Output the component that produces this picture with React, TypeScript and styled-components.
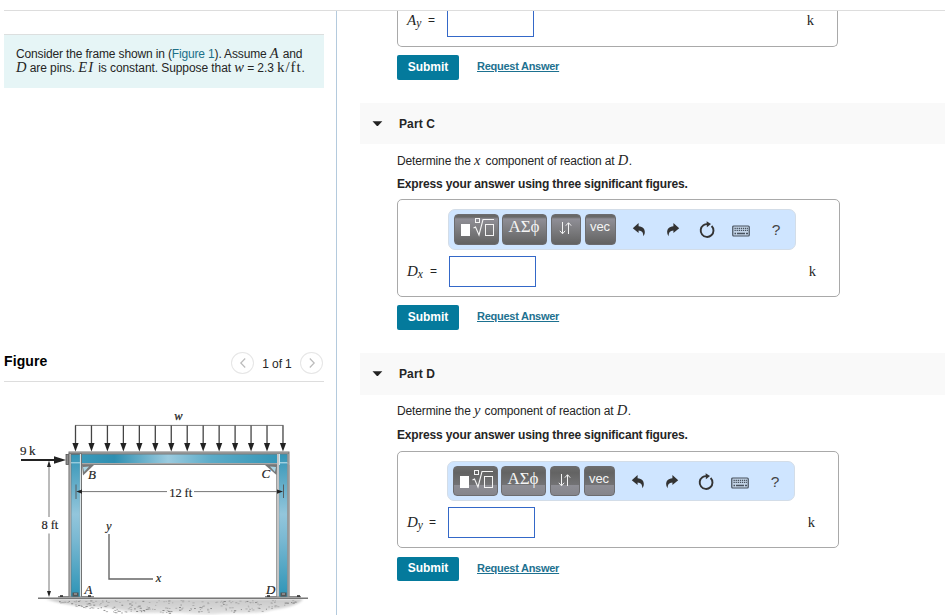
import React from "react";
import styled, { createGlobalStyle, css } from "styled-components";

const Global = createGlobalStyle`
  * { box-sizing: border-box; }
  body { margin: 0; background: #fff; overflow: hidden; }
`;

const sans = `"Liberation Sans", Arial, sans-serif`;
const serif = `"Liberation Serif", "Times New Roman", serif`;

const Page = styled.div`
  width: 945px;
  height: 615px;
  overflow: hidden;
  display: flex;
  flex-direction: column;
  font-family: ${sans};
  font-size: 12px;
  color: #252525;
`;
const TopRule = styled.div`
  flex: none;
  height: 11px;
  margin-left: 4px;
  border-bottom: 1px solid #ddd;
`;
const Columns = styled.div`
  flex: 1;
  min-height: 0;
  display: flex;
`;
const Aside = styled.aside`
  width: 337px;
  flex: none;
  border-right: 1px solid #b4cadd;
  display: flex;
  flex-direction: column;
  padding-top: 23px;
`;
const Problem = styled.div`
  margin-left: 4px;
  width: 320px;
  height: 54px;
  flex: none;
  background: #e6f5f6;
  border-top: 1px solid #dcdfdf;
  padding: 12px 0 0 12px;
`;
const Line = styled.div<{ $ls?: number }>`
  height: 14px;
  line-height: 14px;
  white-space: nowrap;
  letter-spacing: ${(p) => p.$ls ?? 0}px;
`;
const Var = styled.i<{ $track?: number; $pad?: number }>`
  font-family: ${serif};
  font-size: 14.5px;
  line-height: 0;
  letter-spacing: ${(p) => p.$track ?? 0}px;
  padding-right: ${(p) => p.$pad ?? 0}px;
`;
const Roman = styled.span`
  font-family: ${serif};
  font-size: 15px;
  line-height: 0;
  letter-spacing: 0.9px;
`;
const FigureLink = styled.a`
  color: #1c7088;
`;
const FigureBar = styled.div`
  margin: 258px 0 0 4px;
  width: 320px;
  height: 36px;
  flex: none;
  border-bottom: 1px solid #ddd;
  display: flex;
  align-items: flex-start;
  justify-content: space-between;
`;
const FigureTitle = styled.h2`
  margin: 6px 0 0;
  font-size: 14px;
  line-height: 18px;
  color: #000;
  letter-spacing: 0.1px;
`;
const Pager = styled.div`
  display: flex;
  align-items: center;
  margin: 6px 1px 0 0;
  height: 22px;
`;
const PageCount = styled.span`
  width: 46px;
  text-align: center;
  line-height: 16px;
  padding-top: 1px;
  letter-spacing: -0.12px;
`;
const RoundButton = styled.button`
  width: 23px;
  height: 22px;
  border: 1px solid #e6e6e6;
  border-radius: 50%;
  background: #fff;
  padding: 0;
  display: flex;
  align-items: center;
  justify-content: center;
`;
const FigureArea = styled.figure`
  margin: 0;
  padding-top: 18px;
  line-height: 0;
`;
const Main = styled.main`
  flex: 1;
  min-width: 0;
  padding-left: 23px;
  overflow: hidden;
`;
const PartHeader = styled.header<{ $h: number }>`
  display: flex;
  align-items: center;
  height: ${(p) => p.$h}px;
  background: #f9f9f9;
  margin-top: 23px;
  padding-left: 12px;
  svg { margin-right: 16px; }
`;
const PartTitle = styled.h3`
  margin: 0;
  font-size: 12px;
  line-height: 16px;
  letter-spacing: 0.12px;
`;
const PartBody = styled.section`
  padding-left: 37px;
`;
const Question = styled.p<{ $top: number }>`
  margin: ${(p) => p.$top}px 0 0;
  line-height: 16px;
  height: 16px;
  letter-spacing: -0.13px;
  white-space: nowrap;
`;
const Instruction = styled.p<{ $top: number }>`
  margin: ${(p) => p.$top}px 0 0;
  font-weight: bold;
  line-height: 14px;
  height: 14px;
  letter-spacing: -0.155px;
  white-space: nowrap;
`;
const AnswerBox = styled.div<{ $w: number; $h: number; $top?: number; $cut?: boolean }>`
  width: ${(p) => p.$w}px;
  height: ${(p) => p.$h}px;
  margin-top: ${(p) => p.$top ?? 0}px;
  border: 1px solid #a9a9a9;
  border-radius: 5px;
  display: flex;
  flex-direction: column;
  padding-top: 9px;
  ${(p) =>
    p.$cut &&
    css`
      border-top: 0;
      border-top-left-radius: 0;
      border-top-right-radius: 0;
      padding-top: 0;
    `}
`;
const Toolbar = styled.div<{ $indent: number; $h: number }>`
  margin: 0 0 6px ${(p) => p.$indent}px;
  width: 348px;
  height: ${(p) => p.$h}px;
  flex: none;
  background: #cfe5ff;
  border: 1px solid #d3dde8;
  border-radius: 7px;
  display: flex;
  padding: 4px 0 0 5px;
`;
const Tool = styled.button<{ $w: number; $gap: number; $glossy?: boolean }>`
  width: ${(p) => p.$w}px;
  height: ${(p) => (p.$glossy ? 30 : 31)}px;
  margin: 0 ${(p) => p.$gap}px 0 0;
  padding: 0;
  border: 1px solid #6c6c6f;
  border-radius: 4px;
  color: #f4f4f4;
  display: flex;
  justify-content: center;
  background: ${(p) =>
    p.$glossy
      ? "linear-gradient(#6c6c6c 0, #636363 20%, #737375 64%, #8d8d94 66%, #85858b 100%)"
      : "linear-gradient(#686868 0, #686868 2px, #8f8e96 4px, #7d7d80 50%, #626262 100%)"};
`;
const Greek = styled.span`
  font-family: ${serif};
  font-size: 17px;
  line-height: 24px;
  letter-spacing: -0.1px;
  margin-left: -1px;
`;
const Vec = styled.span`
  font-family: ${sans};
  font-size: 13px;
  line-height: 23px;
  margin-left: -1px;
`;
const IconCell = styled.span`
  width: 34px;
  height: 32px;
  display: flex;
  justify-content: center;
  align-items: center;
  color: #333;
`;
const Help = styled.span`
  font-size: 15.5px;
  line-height: 30px;
  padding-left: 2px;
  color: #444;
`;
const EntryRow = styled.div<{ $h: number }>`
  display: flex;
  height: ${(p) => p.$h}px;
  flex: none;
`;
const EntryLabel = styled.label<{ $w: number; $cut?: boolean }>`
  width: ${(p) => p.$w}px;
  padding-left: 9px;
  font-family: ${serif};
  font-size: 15px;
  line-height: ${(p) => (p.$cut ? 18 : 30)}px;
  display: flex;
  sub {
    font-size: 11.5px;
    position: relative;
    top: 2px;
    vertical-align: baseline;
    line-height: 0;
  }
`;
const Equals = styled.span`
  margin-left: auto;
  margin-right: 12px;
  font-family: ${sans};
  font-size: 12px;
`;
const Entry = styled.input<{ $cut?: boolean }>`
  width: 87px;
  height: 100%;
  border: 1px solid #3468c8;
  border-top-width: ${(p) => (p.$cut ? 0 : 1)}px;
  background: #fff;
  padding: 0 4px;
  outline: none;
`;
const Unit = styled.span<{ $cut?: boolean }>`
  margin-left: auto;
  margin-right: 23px;
  font-family: ${serif};
  font-size: 14.5px;
  line-height: ${(p) => (p.$cut ? 19 : 31)}px;
`;
const Actions = styled.div<{ $top: number; $h: number }>`
  display: flex;
  margin-top: ${(p) => p.$top}px;
  height: ${(p) => p.$h}px;
`;
const Submit = styled.button`
  width: 62px;
  border: 0;
  border-radius: 2px;
  background: #047a9c;
  color: #fff;
  font: bold 12px/23px ${sans};
  letter-spacing: 0;
  padding: 0 0 1px;
`;
const RequestLink = styled.a`
  margin-left: 18px;
  font-size: 11px;
  line-height: 23px;
  font-weight: bold;
  color: #1d7190;
  text-decoration: underline;
  letter-spacing: -0.26px;
`;

const Triangle = () => (
  <svg width="11" height="6" viewBox="0 0 11 6">
    <path d="M.5 .3H10.3L5.9 5H4.9Z" fill="#222" />
  </svg>
);

const RootIcon = () => (
  <svg width="43" height="28" viewBox="0 0 43 28" fill="none" stroke="#f4f4f4">
    <rect x="6" y="9" width="9" height="12" fill="#fff" stroke="none" />
    <rect x="20.5" y="3.5" width="4" height="4" />
    <path d="M18.5 13L20.5 12L24 20L28 4.5H39" strokeWidth="1.1" />
    <rect x="30.5" y="9.5" width="8" height="11" />
  </svg>
);
const SwapIcon = () => (
  <svg width="28" height="28" viewBox="0 0 28 28" fill="none" stroke="#f4f4f4">
    <path d="M10.5 7V18.5M7.8 15.8L10.5 18.8L13.2 15.8M16.5 19V8M13.8 10.7L16.5 7.7L19.2 10.7" />
  </svg>
);
const UndoIcon = () => (
  <svg width="14" height="16" viewBox="0 0 14 16">
    <path d="M.8 6.2L6.6 1V4.2C11 4.6 13 7 12.8 10.5C12.7 12 12.2 13 11.3 14.2C11.3 10.5 10 8.8 6.6 8.6V11Z" fill="currentColor" />
  </svg>
);
const RedoIcon = () => (
  <svg width="14" height="16" viewBox="0 0 14 16">
    <path d="M13.2 6.2L7.4 1V4.2C3 4.6 1 7 1.2 10.5C1.3 12 1.8 13 2.7 14.2C2.7 10.5 4 8.8 7.4 8.6V11Z" fill="currentColor" />
  </svg>
);
const ResetIcon = () => (
  <svg width="18" height="18" viewBox="0 0 18 18">
    <path d="M5.4 4.3A6.4 6.4 0 1 0 13.6 5M9.3 3.1C7.6 3 6.6 3.5 5.4 4.3" fill="none" stroke="currentColor" strokeWidth="1.9" />
    <path d="M8.6 .3L13 3L8.9 6.2Z" fill="currentColor" />
  </svg>
);
const KeyboardIcon = () => (
  <svg width="18" height="14" viewBox="0 -2 18 14">
    <rect x=".75" y="1" width="16.5" height="10" rx="1" fill="#c2d3e6" stroke="#48525e" strokeWidth="1.2" />
    <path d="M2.5 3.4H16M2.5 5.4H16" stroke="#48525e" strokeWidth="1.3" strokeDasharray="1.3 .8" />
    <path d="M2.5 8.4H4M5 8.4H13M14 8.4H16" stroke="#48525e" strokeWidth="1.5" />
  </svg>
);

const MathToolbar = ({ indent, height, glossy }: { indent: number; height: number; glossy?: boolean }) => (
  <Toolbar $indent={indent} $h={height}>
    <Tool $w={45} $gap={3} $glossy={glossy}><RootIcon /></Tool>
    <Tool $w={45} $gap={4} $glossy={glossy}><Greek>ΑΣϕ</Greek></Tool>
    <Tool $w={30} $gap={4} $glossy={glossy}><SwapIcon /></Tool>
    <Tool $w={31} $gap={6} $glossy={glossy}><Vec>vec</Vec></Tool>
    <IconCell><UndoIcon /></IconCell>
    <IconCell><RedoIcon /></IconCell>
    <IconCell><ResetIcon /></IconCell>
    <IconCell><KeyboardIcon /></IconCell>
    <IconCell><Help>?</Help></IconCell>
  </Toolbar>
);

const SubmitRow = ({ top, height }: { top: number; height: number }) => (
  <Actions $top={top} $h={height}>
    <Submit>Submit</Submit>
    <RequestLink>Request Answer</RequestLink>
  </Actions>
);

const EntryLine = ({ name, sub, labelWidth, cut }: { name: string; sub: string; labelWidth: number; cut?: boolean }) => (
  <EntryRow $h={cut ? 26 : 31}>
    <EntryLabel $w={labelWidth} $cut={cut}>
      <i>{name}<sub>{sub}</sub></i>
      <Equals>=</Equals>
    </EntryLabel>
    <Entry $cut={cut} />
    <Unit $cut={cut}>k</Unit>
  </EntryRow>
);

const noise = (n: number) => {
  const v = Math.sin(n * 127.1 + 11.7) * 43758.5453;
  return v - Math.floor(v);
};
const loads = Array.from({ length: 14 }, (_, i) => 75.5 + i * 15.96);
const speckles = Array.from({ length: 230 }, (_, i) => {
  const x = 56 + noise(i) * 240;
  const depth = x < 105 ? 3 + (x - 56) / 6 : x > 262 ? 11 - (x - 262) / 4 : 13;
  return { x, y: 600 + noise(i + 500) * depth, w: 1 + noise(i + 900) * 1.4, dark: i % 4 === 0 };
});

const FrameDrawing = () => (
  <svg width="336" height="215" viewBox="0 400 336 215" fontFamily={serif} fill="#222">
    <defs>
      <linearGradient id="beam" x1="0" x2="1">
        <stop offset="0" stopColor="#3f9dbd" />
        <stop offset=".2" stopColor="#2f8fb1" />
        <stop offset=".45" stopColor="#9bcbdf" />
        <stop offset=".65" stopColor="#5cabc8" />
        <stop offset="1" stopColor="#2f93b4" />
      </linearGradient>
      <linearGradient id="column" x1="0" x2="0" y1="0" y2="1">
        <stop offset="0" stopColor="#3595b6" />
        <stop offset=".42" stopColor="#93c6dc" />
        <stop offset=".6" stopColor="#79b8d2" />
        <stop offset="1" stopColor="#2d94b6" />
      </linearGradient>
      <linearGradient id="soil" x1="0" x2="0" y1="0" y2="1">
        <stop offset="0" stopColor="#c8c8c8" />
        <stop offset=".7" stopColor="#dadada" />
        <stop offset="1" stopColor="#e6e6e6" />
      </linearGradient>
      <filter id="soften" x="-10%" y="-50%" width="120%" height="200%">
        <feGaussianBlur stdDeviation="1" />
      </filter>
    </defs>

    <path d="M46 599H303C298 606 284 608 272 610C258 615 236 612 215 614.5C192 615 178 611 155 613C130 614 118 608 96 607C76 607 58 603 46 599Z" fill="url(#soil)" filter="url(#soften)" />
    {speckles.map((s, i) => (
      <rect key={i} x={s.x} y={s.y} width={s.w} height=".9" fill={s.dark ? "#808080" : "#ababab"} />
    ))}
    <path d="M38 598.2H308" stroke="#777" strokeWidth="1.6" />
    <path d="M58 596.7H94M265 596.7H301" stroke="#8a8a8a" strokeWidth="1.4" />
    <path d="M60 596H63M88 596H91M267 596H270M297 596H300" stroke="#222" strokeWidth="1.6" />

    <path d="M82 465H94L83 475.5Z" fill="#777" />
    <path d="M83 467L89 466.5L84 472Z" fill="#a9d4e2" />
    <path d="M277 465H265L276.5 475Z" fill="#777" />
    <path d="M276 467L270 466.5L275 472Z" fill="#a9d4e2" />

    <rect x="66" y="454.5" width="3" height="10" fill="#8b8b8b" stroke="#444" strokeWidth=".7" />
    <rect x="68.5" y="451.5" width="221" height="13.5" fill="#777" />
    <rect x="69.5" y="452.3" width="219" height="1.2" fill="#a5a5a5" />
    <rect x="71" y="454.5" width="216" height="8.5" fill="url(#beam)" />
    <rect x="69" y="463.2" width="220" height="1" fill="#b5b5b5" />

    <rect x="68.5" y="453.5" width="13.5" height="143" fill="#666" />
    <rect x="69.4" y="454" width="1.5" height="142.5" fill="#b5b5b5" />
    <rect x="71.3" y="454.7" width="8.6" height="141.8" fill="url(#column)" />
    <rect x="79.9" y="454" width="1.2" height="142.5" fill="#d9e4e8" />
    <path d="M71 462.8H80" stroke="#b9e0ec" />

    <rect x="276.3" y="465" width="13.3" height="131.5" fill="#777" />
    <rect x="277" y="454" width="2.2" height="142.5" fill="#c4c4c4" />
    <rect x="279.2" y="454.7" width="8.2" height="141.8" fill="url(#column)" />
    <rect x="287.4" y="454" width="1.5" height="142.5" fill="#9f9f9f" />
    <path d="M279.5 454V465M280 462.8H287.4" stroke="#c9e8f1" />
    <rect x="72.5" y="592.5" width="6" height="4" fill="#555" />
    <rect x="280.5" y="592.5" width="6" height="4" fill="#555" />
    <path d="M74 594H77M282 594H285" stroke="#bbb" />

    <path d="M75 425.4H283.5" stroke="#777" />
    {loads.map((x) => (
      <g key={x}>
        <path d={`M${x} 425.4V445`} stroke="#444" strokeWidth="1.3" />
        <path d={`M${x - 3.1} 443H${x + 3.1}L${x} 451.6Z`} />
      </g>
    ))}

    <path d="M21 460H57" stroke="#222" strokeWidth="2.2" />
    <path d="M54 456.2L66 460L54 463.8Z" />
    <path d="M49 465V517M49 533.5V592M82 491.6H167M194 491.6H278" stroke="#777" fill="none" />
    <path d="M76 484.5V499M283.5 484.5V498" stroke="#555" strokeWidth=".9" />
    <path d="M47 467L49 460.5L51 467ZM47 591L49 597L51 591ZM82 489.5L76.3 491.6L82 493.7ZM277 489.5L283 491.6L277 493.7Z" />
    <path d="M109 534V579H153" stroke="#666" strokeWidth="1.4" fill="none" />

    <g stroke="#222" strokeWidth=".15">
      <text x="20" y="455" fontSize="13" letterSpacing="-.4">9 k</text>
      <text x="41.5" y="528.7" fontSize="12.5" letterSpacing="-.1">8 ft</text>
      <text x="169.3" y="496.7" fontSize="12.5" letterSpacing="-.1">12 ft</text>
    </g>
    <g fontStyle="italic" stroke="#222" strokeWidth=".15">
      <text x="174.3" y="419.5" fontSize="12.5" strokeWidth=".25">w</text>
      <text x="88" y="479.3" fontSize="13">B</text>
      <text x="261.5" y="478.3" fontSize="13">C</text>
      <text x="84.5" y="594.3" fontSize="13">A</text>
      <text x="266" y="593.6" fontSize="13">D</text>
      <text x="106" y="529.7" fontSize="12.5">y</text>
      <text x="155.7" y="581.7" fontSize="12.5">x</text>
    </g>
  </svg>
);

export default function App() {
  return (
    <>
      <Global />
      <Page>
        <TopRule />
        <Columns>
          <Aside>
            <Problem>
              <Line $ls={-0.15}>
                Consider the frame shown in (<FigureLink>Figure 1</FigureLink>). Assume <Var $pad={1}>A</Var> and
              </Line>
              <Line $ls={-0.08}>
                <Var>D</Var> are pins. <Var $track={1} $pad={1}>EI</Var> is constant. Suppose that <Var>w</Var> = 2.3 <Roman>k/ft</Roman>.
              </Line>
            </Problem>
            <FigureBar>
              <FigureTitle>Figure</FigureTitle>
              <Pager>
                <RoundButton>
                  <svg width="8" height="12" viewBox="0 0 8 12" fill="none" stroke="#bbb" strokeWidth="1.2"><path d="M6.2 1.5L1.8 6L6.2 10.5" /></svg>
                </RoundButton>
                <PageCount>1 of 1</PageCount>
                <RoundButton>
                  <svg width="8" height="12" viewBox="0 0 8 12" fill="none" stroke="#bbb" strokeWidth="1.2"><path d="M1.8 1.5L6.2 6L1.8 10.5" /></svg>
                </RoundButton>
              </Pager>
            </FigureBar>
            <FigureArea><FrameDrawing /></FigureArea>
          </Aside>
          <Main>
            <PartBody>
              <AnswerBox $w={441} $h={36} $cut>
                <EntryLine name="A" sub="y" labelWidth={49} cut />
              </AnswerBox>
              <SubmitRow top={8} height={25} />
            </PartBody>

            <PartHeader $h={41}><Triangle /><PartTitle>Part C</PartTitle></PartHeader>
            <PartBody>
              <Question $top={9}>Determine the <Var $pad={2}>x</Var> component of reaction at <Var $pad={0.5}>D</Var>.</Question>
              <Instruction $top={8}>Express your answer using three significant figures.</Instruction>
              <AnswerBox $w={443} $h={98} $top={8}>
                <MathToolbar indent={50} height={41} />
                <EntryLine name="D" sub="x" labelWidth={51} />
              </AnswerBox>
              <SubmitRow top={8} height={25} />
            </PartBody>

            <PartHeader $h={42}><Triangle /><PartTitle>Part D</PartTitle></PartHeader>
            <PartBody>
              <Question $top={8}>Determine the <Var $pad={1}>y</Var> component of reaction at <Var $pad={0.5}>D</Var>.</Question>
              <Instruction $top={9}>Express your answer using three significant figures.</Instruction>
              <AnswerBox $w={442} $h={97} $top={9}>
                <MathToolbar indent={49} height={40} glossy />
                <EntryLine name="D" sub="y" labelWidth={50} />
              </AnswerBox>
              <SubmitRow top={9} height={24} />
            </PartBody>
          </Main>
        </Columns>
      </Page>
    </>
  );
}
